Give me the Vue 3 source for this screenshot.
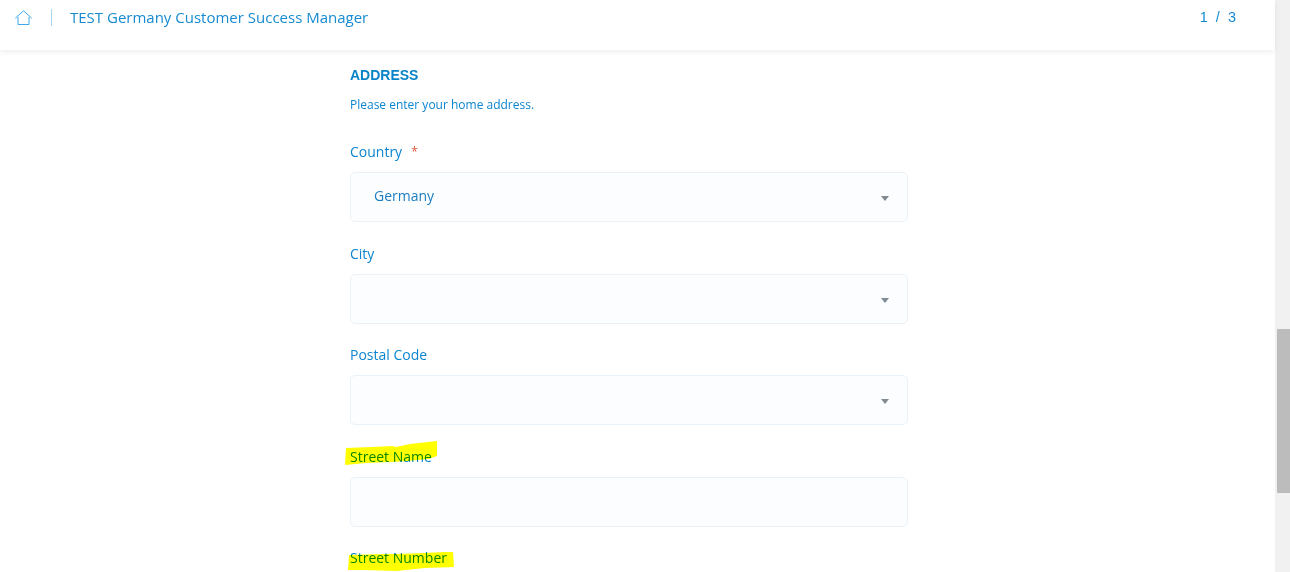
<script setup>
const fields = [
  { label: 'Country', required: true, value: 'Germany', select: true },
  { label: 'City', select: true },
  { label: 'Postal Code', select: true },
  { label: 'Street Name' },
]
</script>

<template>
  <div class="page">
    <div class="main">
      <header class="topbar">
        <svg class="home" width="18" height="16" viewBox="0 0 18 16" fill="none" stroke="#3fa7e6" stroke-width="1">
          <path d="M0.3 8.2 L8.5 0.8 L16.7 8.2" />
          <path d="M3 7 V14.5 H14 V7" />
        </svg>
        <span class="divider"></span>
        <span class="title">TEST Germany Customer Success Manager</span>
        <span class="pager">1&nbsp; /&nbsp; 3</span>
      </header>
      <main class="form">
        <h2 class="heading">ADDRESS</h2>
        <p class="hint">Please enter your home address.</p>
        <div v-for="f in fields" :key="f.label" class="field">
          <label class="label">{{ f.label }}<span v-if="f.required" class="req">*</span></label>
          <div class="box">
            <span class="value">{{ f.value }}</span>
            <span v-if="f.select" class="caret"></span>
          </div>
        </div>
        <div class="field"><label class="label">Street Number</label></div>
      </main>
      <svg class="marker" width="1275" height="572" viewBox="0 0 1275 572">
        <path d="M346 448 L372 447 L392 446 L396 447 L410 444 L437 441 L437 456 L429 459 L407 461 L392 462 L366 463 L345 465 Z" fill="#ffff00" />
        <path d="M349 555 L385 554 L396 554 L424 553 L445 552 L453 552 L454 567 L425 568 L396 571 L365 570 L348 570 Z" fill="#ffff00" />
      </svg>
    </div>
    <aside class="scrollbar"><div class="thumb"></div></aside>
  </div>
</template>

<style>
html, body { margin: 0; overflow: hidden; background: #fff; }
</style>

<style scoped>
.page {
  display: flex;
  width: 1290px;
  height: 572px;
  overflow: hidden;
  font-family: "Open Sans", "Noto Sans", sans-serif;
  color: #0b85cf;
}
.main { position: relative; flex: 1; min-width: 0; }
.topbar {
  display: flex;
  align-items: center;
  height: 50px;
  padding: 0 39px 15px 15px;
  box-sizing: border-box;
  background: #fff;
  box-shadow: 0 2px 6px rgba(0, 0, 0, 0.07);
}
.home { flex: none; }
.divider { width: 1px; height: 17px; margin: 0 18px 0 18px; background: #a9d3ee; }
.title { margin-top: -1px; font-size: 15px; color: #168bd0; }
.pager { margin-left: auto; margin-top: -1px; font-size: 14.5px; color: #168bd0; font-family: "Liberation Sans", sans-serif; }
.form { width: 558px; margin-left: 350px; }
.heading { margin: 17px 0 0; font: bold 14px/17px "Liberation Sans", sans-serif; color: #0a84c9; }
.hint { margin: 13px 0 0; font-size: 12px; line-height: 16px; }
.field { margin-top: 29px; }
.field + .field { margin-top: 21.6px; }
.label { display: block; height: 20px; font-size: 14px; line-height: 20px; }
.req { margin-left: 9px; color: #d9563a; font-size: 12px; vertical-align: 1px; }
.box {
  display: flex;
  align-items: center;
  justify-content: space-between;
  height: 50px;
  margin-top: 10px;
  padding: 0 18px 0 23px;
  box-sizing: border-box;
  background: #fcfdfe;
  border: 1px solid #eaf2f9;
  border-radius: 5px;
  font-size: 14px;
  color: #1b7dc4;
}
.value { margin-top: -4px; }
.caret {
  width: 0;
  height: 0;
  margin-top: 3px;
  border-left: 4px solid transparent;
  border-right: 4px solid transparent;
  border-top: 5px solid #7f8a93;
}
.marker { position: absolute; left: 0; top: 0; mix-blend-mode: multiply; pointer-events: none; }
.scrollbar { flex: none; width: 15px; background: #f1f1f1; }
.thumb { width: 13px; height: 164px; margin: 329px 0 0 2px; background: #bcbcbc; }
</style>
